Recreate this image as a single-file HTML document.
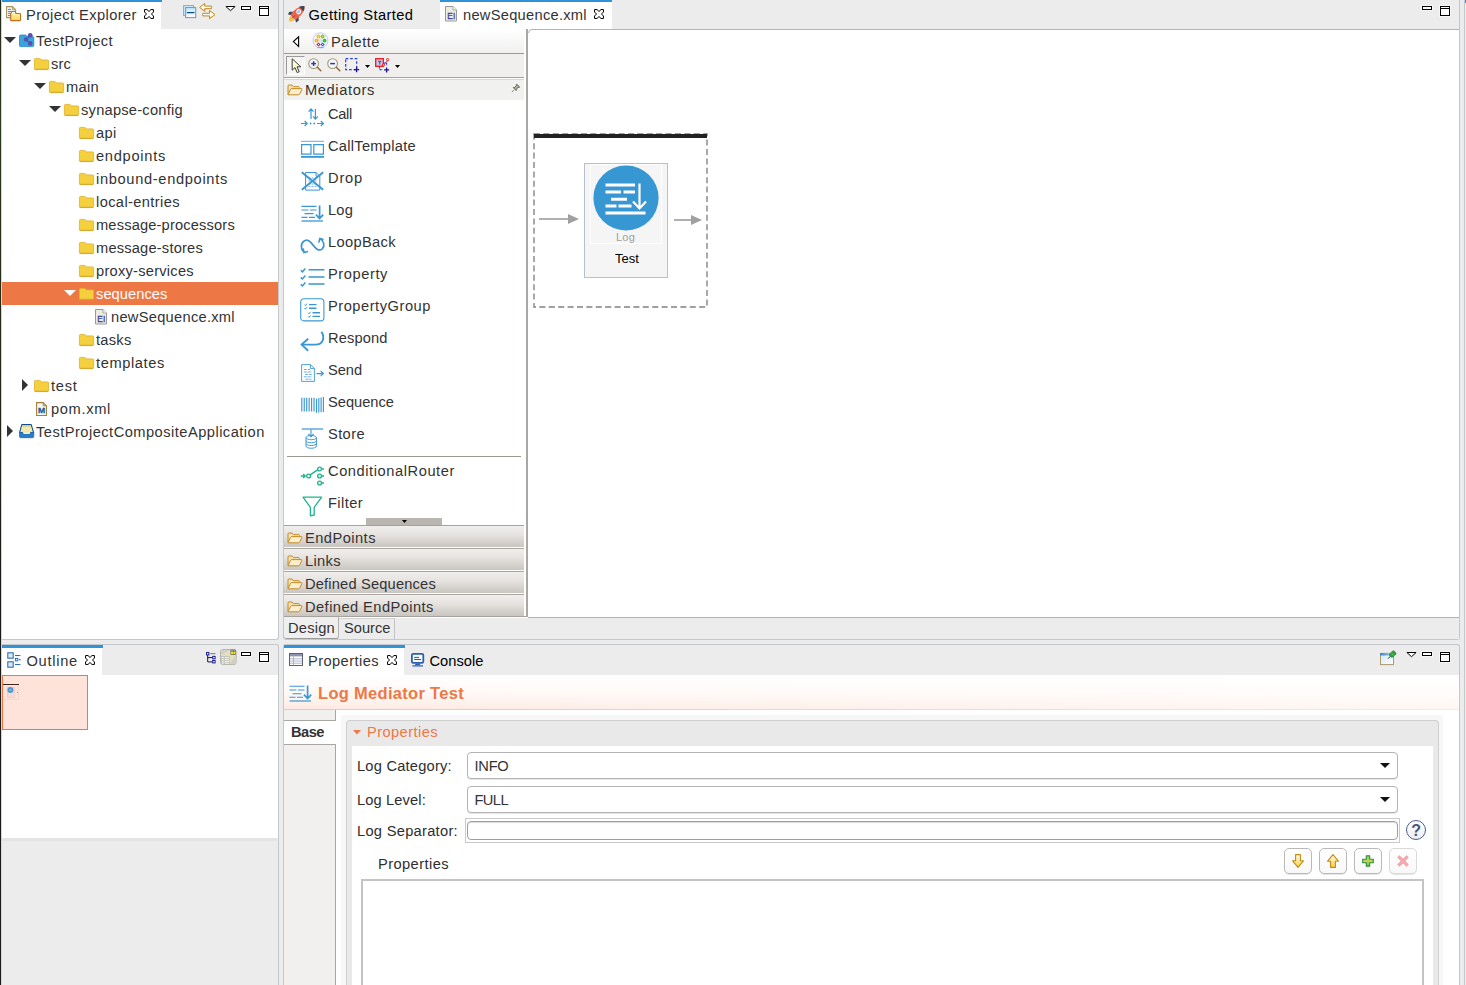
<!DOCTYPE html>
<html><head><meta charset="utf-8"><title>IDE</title>
<style>
html,body{margin:0;padding:0;}
body{width:1466px;height:985px;overflow:hidden;background:#ececec;position:relative;font-family:"Liberation Sans",sans-serif;}
div,span.t,svg{position:absolute;box-sizing:border-box;}
span.t{white-space:nowrap;}
svg{overflow:visible;}
</style></head><body>
<div style="left:0px;top:0px;width:1px;height:985px;background:linear-gradient(#232a18 0%,#2c3a1c 12%,#1f2416 45%,#1a1a1a 60%,#1c1c1c 100%);"></div>
<div style="left:1px;top:0px;width:1px;height:985px;background:#d2d6da;"></div>
<div style="left:2px;top:0px;width:277px;height:640px;background:#fff;border-right:1px solid #c3c8cd;border-bottom:1px solid #c3c8cd;border-radius:0 0 3px 0;"></div>
<div style="left:161px;top:0px;width:117px;height:29px;background:#ececec;"></div>
<div style="left:2px;top:0px;width:160px;height:2px;background:#3093d9;"></div>
<div style="left:2px;top:644px;width:277px;height:341px;background:#ececec;border-right:1px solid #c3c8cd;border-top:1px solid #c3c8cd;border-radius:0 3px 0 0;"></div>
<div style="left:2px;top:675px;width:276px;height:163px;background:#fff;"></div>
<div style="left:2px;top:648px;width:100px;height:27px;background:#fff;"></div>
<div style="left:2px;top:645px;width:101px;height:3px;background:#3093d9;"></div>
<div style="left:283px;top:0px;width:1177px;height:640px;background:#fff;border:1px solid #c3c8cd;border-top:0;border-radius:0 0 3px 3px;"></div>
<div style="left:284px;top:0px;width:1175px;height:29px;background:#ececec;"></div>
<div style="left:440px;top:0px;width:172px;height:29px;background:#fff;"></div>
<div style="left:440px;top:0px;width:172px;height:2px;background:#3093d9;"></div>
<div style="left:283px;top:644px;width:1177px;height:341px;background:#ececec;border:1px solid #c3c8cd;border-bottom:0;border-radius:3px 3px 0 0;"></div>
<div style="left:284px;top:675px;width:1175px;height:310px;background:#fff;"></div>
<div style="left:284px;top:648px;width:120px;height:27px;background:#fff;"></div>
<div style="left:284px;top:645px;width:121px;height:3px;background:#3093d9;"></div>
<div style="left:1464px;top:0px;width:1px;height:985px;background:#c3c8cd;"></div>
<div style="left:1465px;top:0px;width:1px;height:3px;background:#3093d9;"></div>
<svg width="0" height="0" style="left:0;top:0"><defs><linearGradient id="gf" x1="0" y1="0" x2="0" y2="1"><stop offset="0" stop-color="#fff8b8"/><stop offset="1" stop-color="#ffd45c"/></linearGradient></defs></svg>
<svg style="left:6px;top:6px;" width="16" height="16" viewBox="0 0 16 16"><path d="M0.6,0.6 L6.4,0.6 L9.6,3.8 L9.6,11.6 L0.6,11.6 Z" fill="#f4f6fc" stroke="#a8945c" stroke-width="1.1"/>
<path d="M6.4,0.6 L6.4,3.8 L9.6,3.8 Z" fill="#d8c078" stroke="#a8945c" stroke-width="0.7"/>
<path d="M2,3.4 h3 M2,5.5 h4.6 M2,7.4 h3 M2,9.5 h3" stroke="#5f86d0" stroke-width="1"/>
<path d="M4.7,14.4 L4.7,8 Q4.7,7.6 5.1,7 L5.6,5.9 Q5.8,5.5 6.3,5.5 L8.6,5.5 Q9.1,5.5 9.3,5.9 L10,7.5 L13.7,7.5 Q14.6,7.5 14.6,8.4 L14.6,13.7 Q14.6,14.6 13.7,14.6 L5.6,14.6 Q4.7,14.6 4.7,13.7 Z" fill="url(#gf)" stroke="#b8701e" stroke-width="1.1" stroke-linejoin="round"/>
<path d="M6.2,6.6 h2.6" stroke="#fff" stroke-width="1"/></svg>
<span class="t" style="left:26px;top:6px;font-size:14.67px;line-height:19px;letter-spacing:0.415px;color:#333;">Project Explorer</span>
<svg style="left:144px;top:9px;" width="10" height="10" viewBox="0 0 10 10"><path d="M0.55,0.55 L3,0.55 L5,2.5 L7,0.55 L9.45,0.55 L9.45,3 L7.5,5 L9.45,7 L9.45,9.45 L7,9.45 L5,7.5 L3,9.45 L0.55,9.45 L0.55,7 L2.5,5 L0.55,3 Z" fill="#fff" stroke="#000" stroke-width="1.0" stroke-linejoin="round"/></svg>
<svg width="0" height="0" style="left:0;top:0"><defs><linearGradient id="gc" x1="0" y1="0" x2="0" y2="1"><stop offset="0" stop-color="#c4eafc"/><stop offset="1" stop-color="#ffffff"/></linearGradient><linearGradient id="ga" x1="0" y1="0" x2="0" y2="1"><stop offset="0" stop-color="#fff6cc"/><stop offset="0.5" stop-color="#fffdf4"/><stop offset="1" stop-color="#ffe89c"/></linearGradient></defs></svg>
<svg style="left:183px;top:5px;" width="14" height="14" viewBox="0 0 14 14"><rect x="0.6" y="0.6" width="10" height="10" fill="#c8ecfc" stroke="#9aa2c0" stroke-width="1"/>
<rect x="2.7" y="2.6" width="10" height="10" fill="url(#gc)" stroke="#8a93b2" stroke-width="1.1"/>
<path d="M4.4,7.6 h6.6" stroke="#0a4884" stroke-width="1.3" stroke-linecap="round"/></svg>
<svg style="left:199px;top:3px;" width="17" height="16" viewBox="0 0 17 16"><path d="M0.7,4.4 L5.7,0.5 L5.7,3.1 L12.3,3.1 Q13,4.4 12.3,5.7 L5.7,5.7 L5.7,8.3 Z" fill="url(#ga)" stroke="#c0881a" stroke-width="1" stroke-linejoin="round"/>
<path d="M16,11.6 L10.5,7.5 L10.5,10.3 L3.9,10.3 Q3.2,11.6 3.9,12.9 L10.5,12.9 L10.5,15.7 Z" fill="url(#ga)" stroke="#c0881a" stroke-width="1" stroke-linejoin="round"/></svg>
<svg style="left:225px;top:6px;" width="11" height="6" viewBox="0 0 11 6"><path d="M0.9,0.5 L10.1,0.5 L5.5,4.7 Z" fill="#fff" stroke="#000" stroke-width="1"/></svg>
<div style="left:240px;top:5px;width:12px;height:6px;background:#fff;opacity:.55;"></div>
<div style="left:241px;top:6px;width:10px;height:4px;border:1px solid #000;background:#fff;"></div>
<div style="left:258px;top:5px;width:12px;height:12px;background:#fff;opacity:.55;"></div>
<div style="left:259px;top:6px;width:10px;height:10px;border:1px solid #000;background:#fff;"></div>
<div style="left:259px;top:8px;width:10px;height:1px;background:#000;"></div>
<svg style="left:4px;top:37px;" width="12" height="6" viewBox="0 0 12 6"><path d="M0,0 L12,0 L6,6 Z" fill="#333"/></svg>
<svg style="left:19px;top:32px;" width="16" height="16" viewBox="0 0 16 16"><path d="M0.5,4.2 Q0.5,3 1.7,3 L6.4,3 Q7,3 7.4,3.6 L8,4.6 L13.6,4.6 Q14.8,4.6 14.8,5.8 L14.8,13.4 Q14.8,14.6 13.6,14.6 L1.7,14.6 Q0.5,14.6 0.5,13.4 Z" fill="#38a4dc" stroke="#1f86c8" stroke-width="0.8"/>
<path d="M11.2,3.3 L7.1,7.5 L11.2,11.4" stroke="#5b50b0" stroke-width="1.2" fill="none"/>
<circle cx="11.2" cy="3.3" r="2.4" fill="#5b50b0"/><circle cx="7.1" cy="7.5" r="2.3" fill="#5b50b0"/><circle cx="11.2" cy="11.4" r="2.3" fill="#5b50b0"/></svg>
<span class="t" style="left:36px;top:32px;font-size:14.67px;line-height:19px;letter-spacing:0.403px;color:#333333;">TestProject</span>
<svg style="left:19px;top:60px;" width="12" height="6" viewBox="0 0 12 6"><path d="M0,0 L12,0 L6,6 Z" fill="#333"/></svg>
<svg style="left:34px;top:58px;" width="15" height="12" viewBox="0 0 15 12"><path d="M0.4,1.5 Q0.4,0.4 1.5,0.4 L5.4,0.4 Q6.3,0.4 6.8,1.2 L7.2,1.9 L13.5,1.9 Q14.6,1.9 14.6,3 L14.6,10.5 Q14.6,11.6 13.5,11.6 L1.5,11.6 Q0.4,11.6 0.4,10.5 Z" fill="#f4d03f" stroke="#e0b02a" stroke-width="0.8"/><path d="M0.8,11.3 L14.2,11.3" stroke="#d09c22" stroke-width="0.8"/></svg>
<span class="t" style="left:51px;top:55px;font-size:14.67px;line-height:19px;letter-spacing:0.148px;color:#333333;">src</span>
<svg style="left:34px;top:83px;" width="12" height="6" viewBox="0 0 12 6"><path d="M0,0 L12,0 L6,6 Z" fill="#333"/></svg>
<svg style="left:49px;top:81px;" width="15" height="12" viewBox="0 0 15 12"><path d="M0.4,1.5 Q0.4,0.4 1.5,0.4 L5.4,0.4 Q6.3,0.4 6.8,1.2 L7.2,1.9 L13.5,1.9 Q14.6,1.9 14.6,3 L14.6,10.5 Q14.6,11.6 13.5,11.6 L1.5,11.6 Q0.4,11.6 0.4,10.5 Z" fill="#f4d03f" stroke="#e0b02a" stroke-width="0.8"/><path d="M0.8,11.3 L14.2,11.3" stroke="#d09c22" stroke-width="0.8"/></svg>
<span class="t" style="left:66px;top:78px;font-size:14.67px;line-height:19px;letter-spacing:0.301px;color:#333333;">main</span>
<svg style="left:49px;top:106px;" width="12" height="6" viewBox="0 0 12 6"><path d="M0,0 L12,0 L6,6 Z" fill="#333"/></svg>
<svg style="left:64px;top:104px;" width="15" height="12" viewBox="0 0 15 12"><path d="M0.4,1.5 Q0.4,0.4 1.5,0.4 L5.4,0.4 Q6.3,0.4 6.8,1.2 L7.2,1.9 L13.5,1.9 Q14.6,1.9 14.6,3 L14.6,10.5 Q14.6,11.6 13.5,11.6 L1.5,11.6 Q0.4,11.6 0.4,10.5 Z" fill="#f4d03f" stroke="#e0b02a" stroke-width="0.8"/><path d="M0.8,11.3 L14.2,11.3" stroke="#d09c22" stroke-width="0.8"/></svg>
<span class="t" style="left:81px;top:101px;font-size:14.67px;line-height:19px;letter-spacing:0.238px;color:#333333;">synapse-config</span>
<svg style="left:79px;top:127px;" width="15" height="12" viewBox="0 0 15 12"><path d="M0.4,1.5 Q0.4,0.4 1.5,0.4 L5.4,0.4 Q6.3,0.4 6.8,1.2 L7.2,1.9 L13.5,1.9 Q14.6,1.9 14.6,3 L14.6,10.5 Q14.6,11.6 13.5,11.6 L1.5,11.6 Q0.4,11.6 0.4,10.5 Z" fill="#f4d03f" stroke="#e0b02a" stroke-width="0.8"/><path d="M0.8,11.3 L14.2,11.3" stroke="#d09c22" stroke-width="0.8"/></svg>
<span class="t" style="left:96px;top:124px;font-size:14.67px;line-height:19px;letter-spacing:0.308px;color:#333333;">api</span>
<svg style="left:79px;top:150px;" width="15" height="12" viewBox="0 0 15 12"><path d="M0.4,1.5 Q0.4,0.4 1.5,0.4 L5.4,0.4 Q6.3,0.4 6.8,1.2 L7.2,1.9 L13.5,1.9 Q14.6,1.9 14.6,3 L14.6,10.5 Q14.6,11.6 13.5,11.6 L1.5,11.6 Q0.4,11.6 0.4,10.5 Z" fill="#f4d03f" stroke="#e0b02a" stroke-width="0.8"/><path d="M0.8,11.3 L14.2,11.3" stroke="#d09c22" stroke-width="0.8"/></svg>
<span class="t" style="left:96px;top:147px;font-size:14.67px;line-height:19px;letter-spacing:0.709px;color:#333333;">endpoints</span>
<svg style="left:79px;top:173px;" width="15" height="12" viewBox="0 0 15 12"><path d="M0.4,1.5 Q0.4,0.4 1.5,0.4 L5.4,0.4 Q6.3,0.4 6.8,1.2 L7.2,1.9 L13.5,1.9 Q14.6,1.9 14.6,3 L14.6,10.5 Q14.6,11.6 13.5,11.6 L1.5,11.6 Q0.4,11.6 0.4,10.5 Z" fill="#f4d03f" stroke="#e0b02a" stroke-width="0.8"/><path d="M0.8,11.3 L14.2,11.3" stroke="#d09c22" stroke-width="0.8"/></svg>
<span class="t" style="left:96px;top:170px;font-size:14.67px;line-height:19px;letter-spacing:0.664px;color:#333333;">inbound-endpoints</span>
<svg style="left:79px;top:196px;" width="15" height="12" viewBox="0 0 15 12"><path d="M0.4,1.5 Q0.4,0.4 1.5,0.4 L5.4,0.4 Q6.3,0.4 6.8,1.2 L7.2,1.9 L13.5,1.9 Q14.6,1.9 14.6,3 L14.6,10.5 Q14.6,11.6 13.5,11.6 L1.5,11.6 Q0.4,11.6 0.4,10.5 Z" fill="#f4d03f" stroke="#e0b02a" stroke-width="0.8"/><path d="M0.8,11.3 L14.2,11.3" stroke="#d09c22" stroke-width="0.8"/></svg>
<span class="t" style="left:96px;top:193px;font-size:14.67px;line-height:19px;letter-spacing:0.378px;color:#333333;">local-entries</span>
<svg style="left:79px;top:219px;" width="15" height="12" viewBox="0 0 15 12"><path d="M0.4,1.5 Q0.4,0.4 1.5,0.4 L5.4,0.4 Q6.3,0.4 6.8,1.2 L7.2,1.9 L13.5,1.9 Q14.6,1.9 14.6,3 L14.6,10.5 Q14.6,11.6 13.5,11.6 L1.5,11.6 Q0.4,11.6 0.4,10.5 Z" fill="#f4d03f" stroke="#e0b02a" stroke-width="0.8"/><path d="M0.8,11.3 L14.2,11.3" stroke="#d09c22" stroke-width="0.8"/></svg>
<span class="t" style="left:96px;top:216px;font-size:14.67px;line-height:19px;letter-spacing:0.158px;color:#333333;">message-processors</span>
<svg style="left:79px;top:242px;" width="15" height="12" viewBox="0 0 15 12"><path d="M0.4,1.5 Q0.4,0.4 1.5,0.4 L5.4,0.4 Q6.3,0.4 6.8,1.2 L7.2,1.9 L13.5,1.9 Q14.6,1.9 14.6,3 L14.6,10.5 Q14.6,11.6 13.5,11.6 L1.5,11.6 Q0.4,11.6 0.4,10.5 Z" fill="#f4d03f" stroke="#e0b02a" stroke-width="0.8"/><path d="M0.8,11.3 L14.2,11.3" stroke="#d09c22" stroke-width="0.8"/></svg>
<span class="t" style="left:96px;top:239px;font-size:14.67px;line-height:19px;letter-spacing:0.189px;color:#333333;">message-stores</span>
<svg style="left:79px;top:265px;" width="15" height="12" viewBox="0 0 15 12"><path d="M0.4,1.5 Q0.4,0.4 1.5,0.4 L5.4,0.4 Q6.3,0.4 6.8,1.2 L7.2,1.9 L13.5,1.9 Q14.6,1.9 14.6,3 L14.6,10.5 Q14.6,11.6 13.5,11.6 L1.5,11.6 Q0.4,11.6 0.4,10.5 Z" fill="#f4d03f" stroke="#e0b02a" stroke-width="0.8"/><path d="M0.8,11.3 L14.2,11.3" stroke="#d09c22" stroke-width="0.8"/></svg>
<span class="t" style="left:96px;top:262px;font-size:14.67px;line-height:19px;letter-spacing:0.246px;color:#333333;">proxy-services</span>
<div style="left:2px;top:282px;width:276px;height:23px;background:#ee7746;"></div>
<svg style="left:64px;top:290px;" width="12" height="6" viewBox="0 0 12 6"><path d="M0,0 L12,0 L6,6 Z" fill="#fff"/></svg>
<svg style="left:79px;top:288px;" width="15" height="12" viewBox="0 0 15 12"><path d="M0.4,1.5 Q0.4,0.4 1.5,0.4 L5.4,0.4 Q6.3,0.4 6.8,1.2 L7.2,1.9 L13.5,1.9 Q14.6,1.9 14.6,3 L14.6,10.5 Q14.6,11.6 13.5,11.6 L1.5,11.6 Q0.4,11.6 0.4,10.5 Z" fill="#f4d03f" stroke="#e0b02a" stroke-width="0.8"/><path d="M0.8,11.3 L14.2,11.3" stroke="#d09c22" stroke-width="0.8"/></svg>
<span class="t" style="left:96px;top:285px;font-size:14.67px;line-height:19px;letter-spacing:0.060px;color:#fff;">sequences</span>
<svg style="left:95px;top:309px;" width="13" height="16" viewBox="0 0 13 16"><path d="M0.5,0.5 L8,0.5 L11.5,4 L11.5,15 L0.5,15 Z" fill="#ecece0" stroke="#9a9a94" stroke-width="1"/><path d="M8,0.5 L8,4 L11.5,4" fill="#fafaf4" stroke="#9a9a94" stroke-width="0.8"/>
<text x="2.3" y="12.9" font-family="Liberation Sans" font-size="9.8" fill="#3a3f9c" stroke="#3a3f9c" stroke-width="0.3" textLength="8" lengthAdjust="spacingAndGlyphs">EI</text></svg>
<span class="t" style="left:111px;top:308px;font-size:14.67px;line-height:19px;letter-spacing:0.275px;color:#333333;">newSequence.xml</span>
<svg style="left:79px;top:334px;" width="15" height="12" viewBox="0 0 15 12"><path d="M0.4,1.5 Q0.4,0.4 1.5,0.4 L5.4,0.4 Q6.3,0.4 6.8,1.2 L7.2,1.9 L13.5,1.9 Q14.6,1.9 14.6,3 L14.6,10.5 Q14.6,11.6 13.5,11.6 L1.5,11.6 Q0.4,11.6 0.4,10.5 Z" fill="#f4d03f" stroke="#e0b02a" stroke-width="0.8"/><path d="M0.8,11.3 L14.2,11.3" stroke="#d09c22" stroke-width="0.8"/></svg>
<span class="t" style="left:96px;top:331px;font-size:14.67px;line-height:19px;letter-spacing:0.252px;color:#333333;">tasks</span>
<svg style="left:79px;top:357px;" width="15" height="12" viewBox="0 0 15 12"><path d="M0.4,1.5 Q0.4,0.4 1.5,0.4 L5.4,0.4 Q6.3,0.4 6.8,1.2 L7.2,1.9 L13.5,1.9 Q14.6,1.9 14.6,3 L14.6,10.5 Q14.6,11.6 13.5,11.6 L1.5,11.6 Q0.4,11.6 0.4,10.5 Z" fill="#f4d03f" stroke="#e0b02a" stroke-width="0.8"/><path d="M0.8,11.3 L14.2,11.3" stroke="#d09c22" stroke-width="0.8"/></svg>
<span class="t" style="left:96px;top:354px;font-size:14.67px;line-height:19px;letter-spacing:0.600px;color:#333333;">templates</span>
<svg style="left:22px;top:379px;" width="6" height="12" viewBox="0 0 6 12"><path d="M0,0 L6,6 L0,12 Z" fill="#333"/></svg>
<svg style="left:34px;top:380px;" width="15" height="12" viewBox="0 0 15 12"><path d="M0.4,1.5 Q0.4,0.4 1.5,0.4 L5.4,0.4 Q6.3,0.4 6.8,1.2 L7.2,1.9 L13.5,1.9 Q14.6,1.9 14.6,3 L14.6,10.5 Q14.6,11.6 13.5,11.6 L1.5,11.6 Q0.4,11.6 0.4,10.5 Z" fill="#f4d03f" stroke="#e0b02a" stroke-width="0.8"/><path d="M0.8,11.3 L14.2,11.3" stroke="#d09c22" stroke-width="0.8"/></svg>
<span class="t" style="left:51px;top:377px;font-size:14.67px;line-height:19px;letter-spacing:0.714px;color:#333333;">test</span>
<svg style="left:36px;top:402px;" width="12" height="15" viewBox="0 0 12 15"><path d="M0.6,0.6 L7.2,0.6 L10.5,3.9 L10.5,13.5 L0.6,13.5 Z" fill="#f4f6fc" stroke="#a08234" stroke-width="1.1"/><path d="M7.2,0.6 L7.2,3.9 L10.5,3.9 Z" fill="#dcb45c" stroke="#a08234" stroke-width="0.7"/>
<text x="1.9" y="11" font-family="Liberation Sans" font-size="7.6" font-weight="bold" fill="#1f5a98" stroke="#1f5a98" stroke-width="0.3" textLength="7.2" lengthAdjust="spacingAndGlyphs">M</text></svg>
<span class="t" style="left:51px;top:400px;font-size:14.67px;line-height:19px;letter-spacing:0.653px;color:#333333;">pom.xml</span>
<svg style="left:7px;top:425px;" width="6" height="12" viewBox="0 0 6 12"><path d="M0,0 L6,6 L0,12 Z" fill="#333"/></svg>
<svg style="left:19px;top:424px;" width="16" height="15" viewBox="0 0 16 15"><path d="M2.8,0.6 L12.2,0.6 L14.6,8.6 L0.6,8.6 Z" fill="#f6eeb4" stroke="#0f4f88" stroke-width="1.1" stroke-linejoin="round"/>
<path d="M3.2,1.8 h8.6" stroke="#d6c690" stroke-width="1.6"/><path d="M2.6,4 h9.8 M2,6 h11" stroke="#ece0a0" stroke-width="0.8"/>
<path d="M0.5,8.4 L14.8,8.4 L14.8,12.6 Q14.8,13.7 13.7,13.7 L1.6,13.7 Q0.5,13.7 0.5,12.6 Z" fill="#2b7cc6" stroke="#1c66b0" stroke-width="0.7"/>
<path d="M3.6,7.6 L11.6,7.6 L10.6,9.9 L4.6,9.9 Z" fill="#f6eeb4"/></svg>
<span class="t" style="left:36px;top:423px;font-size:14.67px;line-height:19px;letter-spacing:0.469px;color:#333333;">TestProjectCompositeApplication</span>
<svg style="left:7px;top:652px;" width="14" height="16" viewBox="0 0 14 16"><rect x="0.8" y="0.8" width="5.4" height="5.4" fill="#dcebfb" stroke="#2c6fb4" stroke-width="1.1"/>
<rect x="0.8" y="9.8" width="5.4" height="5.4" fill="#dcebfb" stroke="#2c6fb4" stroke-width="1.1"/>
<rect x="8.4" y="6.4" width="2.4" height="2.4" fill="#fff" stroke="#2c6fb4" stroke-width="1"/>
<path d="M8,3.5 h5.4 M12,7.6 h1.6 M8,12.5 h5.4" stroke="#2c6fb4" stroke-width="1.1"/></svg>
<span class="t" style="left:26.5px;top:652px;font-size:14.67px;line-height:19px;letter-spacing:0.717px;color:#333;">Outline</span>
<svg style="left:85px;top:655px;" width="10" height="10" viewBox="0 0 10 10"><path d="M0.55,0.55 L3,0.55 L5,2.5 L7,0.55 L9.45,0.55 L9.45,3 L7.5,5 L9.45,7 L9.45,9.45 L7,9.45 L5,7.5 L3,9.45 L0.55,9.45 L0.55,7 L2.5,5 L0.55,3 Z" fill="#fff" stroke="#000" stroke-width="1.0" stroke-linejoin="round"/></svg>
<svg style="left:206px;top:652px;" width="10" height="11" viewBox="0 0 10 11"><path d="M1.7,3 v6.9 h5 M1.7,5.6 h5" stroke="#15154a" stroke-width="1" fill="none"/>
<path d="M4.4,1.7 h5" stroke="#6e6e78" stroke-width="1"/>
<rect x="0.5" y="0.5" width="2.4" height="2.4" fill="#fff" stroke="#1c1c8c" stroke-width="1"/>
<rect x="6.7" y="4.4" width="2.4" height="2.4" fill="#fff" stroke="#1c1c8c" stroke-width="1"/>
<rect x="6.7" y="8.5" width="2.4" height="2.4" fill="#fff" stroke="#1c1c8c" stroke-width="1"/></svg>
<svg style="left:220px;top:649px;" width="17" height="16" viewBox="0 0 17 16"><rect x="0.5" y="0.5" width="15.6" height="15" rx="2.2" fill="#e4e0bc" stroke="#b6b6ae" stroke-width="1"/>
<path d="M1,6.4 L9.8,1 L1.6,1 Q1,1 1,1.8 Z" fill="#d2d2cc"/>
<path d="M15.6,6 L15.6,14 Q15.6,15 14.6,15 L10,15 Z" fill="#cfcfc8"/>
<rect x="1.2" y="7" width="8.6" height="8" fill="#c2c2be"/>
<path d="M2,8.6 h1.8 M4.8,8.6 h4.2 M2,10.6 h1.8 M4.8,10.6 h4.2 M2,12.6 h1.8 M4.8,12.6 h4.2 M2,14.3 h1.8 M4.8,14.3 h4.2" stroke="#ecece8" stroke-width="1.1"/>
<rect x="10.4" y="0.6" width="5.6" height="5.4" rx="0.8" fill="#74746e"/>
<path d="M11.2,1.8 h1.6 M13.6,1.8 h1.6" stroke="#c8c8c0" stroke-width="0.8"/>
<rect x="11.1" y="2.9" width="1.9" height="2.2" fill="#f6ea1c"/><rect x="13.5" y="2.9" width="1.9" height="2.2" fill="#f6ea1c"/></svg>
<div style="left:240px;top:651px;width:12px;height:6px;background:#fff;opacity:.55;"></div>
<div style="left:241px;top:652px;width:10px;height:4px;border:1px solid #000;background:#fff;"></div>
<div style="left:258px;top:651px;width:12px;height:12px;background:#fff;opacity:.55;"></div>
<div style="left:259px;top:652px;width:10px;height:10px;border:1px solid #000;background:#fff;"></div>
<div style="left:259px;top:654px;width:10px;height:1px;background:#000;"></div>
<div style="left:2px;top:675px;width:86px;height:55px;background:#fde3d9;border:1px solid #ee7746;"></div>
<div style="left:3px;top:684px;width:16px;height:1px;background:#3a2624;"></div>
<div style="left:7px;top:687px;width:8px;height:11px;background:#f4dcd4;border:1px solid #ecd0c8;"></div>
<div style="left:3px;top:699px;width:15px;height:1px;background:#f3d6cc;"></div>
<div style="left:18px;top:686px;width:1px;height:14px;background:#f3d6cc;"></div>
<div style="left:17px;top:692px;width:1px;height:1px;background:#b09890;"></div>
<svg style="left:7px;top:687px;" width="7" height="7" viewBox="0 0 7 7"><circle cx="3.4" cy="3" r="3" fill="#4f97cf"/><path d="M2,2.4 h2.6 M2,3.6 h2.6" stroke="#9cc4e4" stroke-width="0.6"/></svg>
<div style="left:2px;top:838px;width:275px;height:3px;background:#e4e4e4;"></div>
<div style="left:2px;top:841px;width:276px;height:144px;background:#ececec;"></div>
<svg style="left:288px;top:6px;" width="17" height="17" viewBox="0 0 17 17"><g transform="translate(8.6,7.8) rotate(45)">
<path d="M-3.4,0.4 L-6.4,3.6 L-5.8,6.6 L-2.8,4.8 Z M3.4,0.4 L6.4,3.6 L5.8,6.6 L2.8,4.8 Z" fill="#2f4a60"/>
<path d="M-2.8,4.6 L2.8,4.6 L2.2,8 L0,10.8 L-2.2,8 Z" fill="#f8b83c"/>
<path d="M-1,4.6 L1,4.6 L0,8 Z" fill="#fde28a"/>
<path d="M0,-11 C3.8,-8 4.7,-2 3.5,5.2 L-3.5,5.2 C-4.7,-2 -3.8,-8 0,-11 Z" fill="#f0624e"/>
<path d="M0,-11 C1.6,-9.8 2.6,-8.4 3.2,-6.8 L-3.2,-6.8 C-2.6,-8.4 -1.6,-9.8 0,-11 Z" fill="#2f4a60"/>
<circle cx="0" cy="-2.9" r="2.5" fill="#fff"/><circle cx="0" cy="-2.9" r="1.6" fill="#86d4f4"/>
<path d="M0,2.4 v4" stroke="#2f4a60" stroke-width="0.9"/>
</g></svg>
<span class="t" style="left:308.5px;top:6px;font-size:14.67px;line-height:19px;letter-spacing:0.422px;color:#000;">Getting Started</span>
<svg style="left:445px;top:6px;" width="13" height="16" viewBox="0 0 13 16"><path d="M0.5,0.5 L8,0.5 L11.5,4 L11.5,15 L0.5,15 Z" fill="#ecece0" stroke="#9a9a94" stroke-width="1"/><path d="M8,0.5 L8,4 L11.5,4" fill="#fafaf4" stroke="#9a9a94" stroke-width="0.8"/>
<text x="2.3" y="12.9" font-family="Liberation Sans" font-size="9.8" fill="#3a3f9c" stroke="#3a3f9c" stroke-width="0.3" textLength="8" lengthAdjust="spacingAndGlyphs">EI</text></svg>
<span class="t" style="left:463px;top:6px;font-size:14.67px;line-height:19px;letter-spacing:0.275px;color:#333;">newSequence.xml</span>
<svg style="left:594px;top:9px;" width="10" height="10" viewBox="0 0 10 10"><path d="M0.55,0.55 L3,0.55 L5,2.5 L7,0.55 L9.45,0.55 L9.45,3 L7.5,5 L9.45,7 L9.45,9.45 L7,9.45 L5,7.5 L3,9.45 L0.55,9.45 L0.55,7 L2.5,5 L0.55,3 Z" fill="#fff" stroke="#000" stroke-width="1.0" stroke-linejoin="round"/></svg>
<div style="left:1421px;top:5px;width:12px;height:6px;background:#fff;opacity:.55;"></div>
<div style="left:1422px;top:6px;width:10px;height:4px;border:1px solid #000;background:#fff;"></div>
<div style="left:1439px;top:5px;width:12px;height:12px;background:#fff;opacity:.55;"></div>
<div style="left:1440px;top:6px;width:10px;height:10px;border:1px solid #000;background:#fff;"></div>
<div style="left:1440px;top:8px;width:10px;height:1px;background:#000;"></div>
<div style="left:284px;top:29px;width:242px;height:588px;background:#fff;"></div>
<div style="left:526px;top:29px;width:2px;height:588px;background:#aaa7a2;"></div>
<div style="left:284px;top:29px;width:240px;height:24px;background:linear-gradient(#ffffff,#f1f0ef);"></div>
<div style="left:284px;top:53px;width:240px;height:1px;background:#9b9893;"></div>
<div style="left:284px;top:54px;width:240px;height:23px;background:#f0efee;"></div>
<div style="left:284px;top:77px;width:240px;height:1px;background:#a5a29d;"></div>
<div style="left:284px;top:78px;width:240px;height:1px;background:#fdfdfc;"></div>
<div style="left:284px;top:79px;width:240px;height:1px;background:#dad8d4;"></div>
<div style="left:284px;top:80px;width:240px;height:20px;background:#f1f1ef;"></div>
<svg style="left:292px;top:36px;" width="8" height="11" viewBox="0 0 8 11"><path d="M6.6,0.8 L6.6,10.4 L1.4,5.6 Z" fill="#fff" stroke="#000" stroke-width="1.1" stroke-linejoin="miter"/></svg>
<svg style="left:312px;top:32px;" width="17" height="17" viewBox="0 0 17 17"><circle cx="8.5" cy="8.3" r="7.5" fill="#eef3fc" stroke="#bccbe8" stroke-width="0.9"/>
<ellipse cx="8.5" cy="8.6" rx="2.2" ry="2.2" fill="#d8e2f4"/>
<path d="M5.4,15.6 h6.2" stroke="#7a96dc" stroke-width="0.9"/>
<circle cx="6.5" cy="4.5" r="1.35" fill="#ffe838" stroke="#f6a010" stroke-width="1"/>
<circle cx="10.6" cy="4.5" r="1.35" fill="#d8e838" stroke="#62aa10" stroke-width="1"/>
<circle cx="4.5" cy="8.6" r="1.35" fill="#ffd838" stroke="#f89010" stroke-width="1"/>
<circle cx="12.6" cy="8.6" r="1.35" fill="#58d838" stroke="#10a018" stroke-width="1"/>
<rect x="5.5" y="11.5" width="2" height="2" transform="rotate(45 6.5 12.5)" fill="#fff" stroke="#d81828" stroke-width="1"/>
<rect x="9.6" y="11.5" width="2" height="2" transform="rotate(45 10.6 12.5)" fill="#fff" stroke="#1058e8" stroke-width="1"/></svg>
<span class="t" style="left:331px;top:33px;font-size:14.67px;line-height:19px;letter-spacing:0.475px;color:#333;">Palette</span>
<div style="left:286px;top:56px;width:19px;height:19px;border-top:1px solid #9a9a9a;border-left:1px solid #9a9a9a;border-right:1px solid #fff;border-bottom:1px solid #fff;background:#f6f5f4;"></div>
<svg style="left:291px;top:58px;" width="12" height="16" viewBox="0 0 12 16"><path d="M1.2,0.8 L1.2,12.2 L4,9.6 L6.2,14.6 L8.2,13.7 L6,8.8 L9.8,8.8 Z" fill="#ffffd4" stroke="#3a3a3a" stroke-width="1" stroke-linejoin="round"/></svg>
<svg style="left:308px;top:58px;" width="14" height="14" viewBox="0 0 14 14"><circle cx="5.6" cy="5.6" r="4.9" fill="#f4f6fb" stroke="#a89c72" stroke-width="1.1"/>
<path d="M9.3,9.3 L12.8,12.8" stroke="#8c6a3c" stroke-width="1.5" stroke-linecap="round"/>
<path d="M3.2,5.6 h4.8" stroke="#2a3ea8" stroke-width="1.5"/><path d="M5.6,3.2 v4.8" stroke="#2a3ea8" stroke-width="1.5"/></svg>
<svg style="left:327px;top:58px;" width="14" height="14" viewBox="0 0 14 14"><circle cx="5.6" cy="5.6" r="4.9" fill="#f4f6fb" stroke="#a89c72" stroke-width="1.1"/>
<path d="M9.3,9.3 L12.8,12.8" stroke="#8c6a3c" stroke-width="1.5" stroke-linecap="round"/>
<path d="M3.2,5.6 h4.8" stroke="#2a3ea8" stroke-width="1.5"/></svg>
<svg style="left:345px;top:58px;" width="15" height="15" viewBox="0 0 15 15"><rect x="0.7" y="0.7" width="11" height="11" fill="none" stroke="#1f3fd8" stroke-width="1.2" stroke-dasharray="2.6 1.9"/>
<path d="M11.6,9 v5.2 M9,11.6 h5.2" stroke="#20108a" stroke-width="1.3"/></svg>
<svg style="left:365px;top:64.5px;" width="5" height="3" viewBox="0 0 5 3"><path d="M0,0 L5,0 L2.5,3 Z" fill="#000"/></svg>
<svg style="left:375px;top:58px;" width="15" height="15" viewBox="0 0 15 15"><rect x="0.7" y="0.7" width="7.6" height="7.6" fill="#b9cdf6" stroke="#f01818" stroke-width="1.3"/>
<path d="M3.2,3.4 h3 M4.7,3.4 v3" stroke="#f01818" stroke-width="1.1"/>
<path d="M4.6,8.6 v3 h3.2 M8.4,5 h3.2 v3" stroke="#1f3fd8" stroke-width="1.1" fill="none" stroke-dasharray="2 1"/>
<circle cx="12.6" cy="1.6" r="1.1" fill="#fff" stroke="#f01818" stroke-width="1"/><path d="M12.6,2.6 L9,6.6" stroke="#f01818" stroke-width="1"/>
<circle cx="8.4" cy="7" r="1.1" fill="#fff" stroke="#f01818" stroke-width="1"/>
<path d="M11.6,9.4 v5 M9.1,11.9 h5" stroke="#20108a" stroke-width="1.3"/></svg>
<svg style="left:395px;top:64.5px;" width="5" height="3" viewBox="0 0 5 3"><path d="M0,0 L5,0 L2.5,3 Z" fill="#000"/></svg>
<svg style="left:287px;top:84px;" width="16" height="12" viewBox="0 0 16 12"><path d="M1,10.5 L1,1.8 Q1,1 1.8,1 L5,1 L6.3,2.6 L11.5,2.6 Q12.3,2.6 12.3,3.4 L12.3,4.6" fill="#f7e3b0" stroke="#c48a2c" stroke-width="1"/><path d="M1,10.7 L3.6,5.2 Q3.9,4.6 4.6,4.6 L14.4,4.6 Q15.3,4.6 14.9,5.4 L12.6,10.2 Q12.3,10.8 11.6,10.8 L1.2,10.8 Z" fill="#fbeecb" stroke="#c48a2c" stroke-width="1" stroke-linejoin="round"/></svg>
<span class="t" style="left:305px;top:81px;font-size:14.67px;line-height:19px;letter-spacing:0.621px;color:#333;">Mediators</span>
<svg style="left:511px;top:83px;" width="10" height="10" viewBox="0 0 10 10"><path d="M1,8.9 L3.6,6.3" stroke="#55554c" stroke-width="1" stroke-dasharray="1.1 0.7"/><path d="M2.3,4.6 L2.94,3.96 L3.54,4.56 L5.66,2.44 L5.06,1.84 L5.7,1.2 L8.6,4.1 L7.96,4.74 L7.36,4.14 L5.24,6.26 L5.84,6.86 L5.2,7.5 Z" fill="#b6b29c" stroke="#55554c" stroke-width="0.9" stroke-linejoin="round"/></svg>
<span class="t" style="left:328px;top:105px;font-size:14.67px;line-height:19px;letter-spacing:-0.318px;color:#333;">Call</span>
<span class="t" style="left:328px;top:137px;font-size:14.67px;line-height:19px;letter-spacing:0.267px;color:#333;">CallTemplate</span>
<span class="t" style="left:328px;top:169px;font-size:14.67px;line-height:19px;letter-spacing:0.801px;color:#333;">Drop</span>
<span class="t" style="left:328px;top:201px;font-size:14.67px;line-height:19px;letter-spacing:0.175px;color:#333;">Log</span>
<span class="t" style="left:328px;top:233px;font-size:14.67px;line-height:19px;letter-spacing:0.344px;color:#333;">LoopBack</span>
<span class="t" style="left:328px;top:265px;font-size:14.67px;line-height:19px;letter-spacing:0.570px;color:#333;">Property</span>
<span class="t" style="left:328px;top:297px;font-size:14.67px;line-height:19px;letter-spacing:0.522px;color:#333;">PropertyGroup</span>
<span class="t" style="left:328px;top:329px;font-size:14.67px;line-height:19px;letter-spacing:0.111px;color:#333;">Respond</span>
<span class="t" style="left:328px;top:361px;font-size:14.67px;line-height:19px;letter-spacing:-0.065px;color:#333;">Send</span>
<span class="t" style="left:328px;top:393px;font-size:14.67px;line-height:19px;letter-spacing:-0.009px;color:#333;">Sequence</span>
<span class="t" style="left:328px;top:425px;font-size:14.67px;line-height:19px;letter-spacing:0.387px;color:#333;">Store</span>
<span class="t" style="left:328px;top:462px;font-size:14.67px;line-height:19px;letter-spacing:0.563px;color:#333;">ConditionalRouter</span>
<span class="t" style="left:328px;top:494px;font-size:14.67px;line-height:19px;letter-spacing:0.400px;color:#333;">Filter</span>
<svg style="left:301px;top:108px;" width="23" height="19" viewBox="0 0 23 19"><path d="M10,1 v10 M7.6,3.6 L10,1 L12.4,3.6" stroke="#3a97d4" stroke-width="1.2" fill="none" /><path d="M14.4,1 v10 M12,8.4 L14.4,11 L16.8,8.4" stroke="#3a97d4" stroke-width="1.2" fill="none" /><path d="M0,15.5 h6 M3.6,13 L6.2,15.5 L3.6,18" stroke="#3a97d4" stroke-width="1.2" fill="none" /><path d="M16,15.5 h6.4 M19.8,13 L22.4,15.5 L19.8,18" stroke="#3a97d4" stroke-width="1.2" fill="none" /><circle cx="9.6" cy="15.5" r="0.9" fill="#3a97d4"/><circle cx="13.2" cy="15.5" r="0.9" fill="#3a97d4"/></svg>
<svg style="left:301px;top:140px;" width="23" height="18" viewBox="0 0 23 18"><path d="M0,1.3 h23" stroke="#3a97d4" stroke-width="1" fill="none" opacity=".8"/><path d="M0.6,4.6 h9.4 v9.6 h-9.4 Z M12.8,4.6 h9.6 v9.6 h-9.6 Z" stroke="#3a97d4" stroke-width="1.2" fill="none" /><path d="M0,16.9 h23" stroke="#3a97d4" stroke-width="1.8" fill="none" /></svg>
<svg style="left:301px;top:171px;" width="23" height="20" viewBox="0 0 23 20"><path d="M4.6,1.5 h10.4 l3.8,3.8 v13.8 h-14.2 Z M15,1.5 v3.8 h3.8" stroke="#3a97d4" stroke-width="1" fill="none" /><path d="M7.5,7 h5 M7.5,10 h9 M7.5,13 h9 M7.5,15.6 h9" stroke="#3a97d4" stroke-width="0.9" fill="none" stroke-dasharray="2 1" opacity=".8"/><path d="M0.8,1.2 L22.2,18.8 M22.2,1.2 L0.8,18.8" stroke="#3a97d4" stroke-width="2" fill="none" /></svg>
<svg style="left:301px;top:205px;" width="23" height="17" viewBox="0 0 23 17"><path d="M0.5,1.3 h15 M0.5,5 h7 M9,5 h6.5 M3.5,8.7 h9 M0.5,12.3 h6 M8,12.3 h6" stroke="#3a97d4" stroke-width="1.2" fill="none" /><path d="M0.5,16 h21.5" stroke="#3a97d4" stroke-width="1.3" fill="none" /><path d="M18.6,0.6 v13 M15,9.6 L18.6,13.6 L22.2,9.6" stroke="#3a97d4" stroke-width="1.7" fill="none" /></svg>
<svg style="left:300px;top:236px;" width="25" height="19" viewBox="0 0 25 19"><path d="M4.4,16.2 C0.8,14 0.4,8 3.5,5.5 C6,3.5 9,4.4 11,6.6 L15,11.4 C17,13.8 20,15 22.3,12.8 C25,10 24.2,5.2 20.2,2.8" stroke="#3a97d4" stroke-width="1.7" fill="none" /><path d="M18.8,6.6 L19.8,2.6 L23.6,3.6" stroke="#3a97d4" stroke-width="1.6" fill="none" /><path d="M3.2,12.4 L4,16.6 L8,15.4" stroke="#3a97d4" stroke-width="1.6" fill="none" /></svg>
<svg style="left:300px;top:267px;" width="25" height="19" viewBox="0 0 25 19"><path d="M8.5,2.8 h16 M8.5,10 h16 M8.5,17 h16" stroke="#3a97d4" stroke-width="1.6" fill="none" /><path d="M0.8,3.2 L2.4,4.8 L5.4,1.4 M0.8,10.4 L2.4,12 L5.4,8.6 M0.8,17.4 L2.4,19 L5.4,15.6" stroke="#3a97d4" stroke-width="1.5" fill="none" /></svg>
<svg style="left:300px;top:298px;" width="25" height="24" viewBox="0 0 25 24"><rect x="0.7" y="0.7" width="23.2" height="22.2" rx="3.2" fill="#fff" stroke="#3a97d4" stroke-width="1.1"/><path d="M9,6.6 h7.5 M9,10.2 h7.5 M12.5,14.8 h7.5 M12.5,18.4 h7.5" stroke="#3a97d4" stroke-width="1.4" fill="none" /><path d="M4.4,6.6 L5.4,7.6 L7,5.6 M4.4,10.2 L5.4,11.2 L7,9.2 M8,14.8 L9,15.8 L10.6,13.8 M8,18.4 L9,19.4 L10.6,17.4" stroke="#3a97d4" stroke-width="1" fill="none" /></svg>
<svg style="left:300px;top:331px;" width="25" height="22" viewBox="0 0 25 22"><path d="M21.4,0.8 C25.5,7 22.5,13.6 15.5,13.6 L1.8,13.6" stroke="#3a97d4" stroke-width="1.9" fill="none" /><path d="M8.2,7.8 L1.6,13.6 L8.2,19.8" stroke="#3a97d4" stroke-width="1.9" fill="none" /></svg>
<svg style="left:301px;top:364px;" width="24" height="19" viewBox="0 0 24 19"><path d="M0.6,0.6 h8.8 l4,4 v12.8 h-12.8 Z M9.4,0.6 v4 h4" stroke="#3a97d4" stroke-width="0.9" fill="none" /><path d="M2.8,5.5 h3 M7,5.5 h2 M2.8,8 h8 M4,10.4 h7 M2.8,12.8 h8 M4.5,15.2 h6" stroke="#3a97d4" stroke-width="0.9" fill="none" opacity=".85" stroke-dasharray="3 0.8"/><path d="M15.5,9.6 h6.6 M19.6,7 L22.4,9.6 L19.6,12.2" stroke="#3a97d4" stroke-width="1.1" fill="none" /></svg>
<svg style="left:301px;top:397px;" width="23" height="17" viewBox="0 0 23 17"><path d="M0.80,0.8 v13.6" stroke="#3a97d4" stroke-width="1.15" fill="none" /><path d="M3.25,0.8 v13.6" stroke="#3a97d4" stroke-width="1.15" fill="none" /><path d="M5.70,0.8 v13.6" stroke="#3a97d4" stroke-width="1.15" fill="none" /><path d="M8.15,0.8 v13.6" stroke="#3a97d4" stroke-width="1.15" fill="none" /><path d="M10.60,0.8 v13.6" stroke="#3a97d4" stroke-width="1.15" fill="none" /><path d="M13.05,0.8 v13.6" stroke="#3a97d4" stroke-width="1.15" fill="none" /><path d="M15.50,1.6 v14.2" stroke="#3a97d4" stroke-width="1.15" fill="none" /><path d="M17.80,1.1 v14.4" stroke="#3a97d4" stroke-width="1.15" fill="none" /><path d="M20.10,0.6 v14.6" stroke="#3a97d4" stroke-width="1.15" fill="none" /><path d="M22.40,0.1 v14.8" stroke="#3a97d4" stroke-width="1.15" fill="none" /></svg>
<svg style="left:301px;top:428px;" width="23" height="20" viewBox="0 0 23 20"><path d="M0.8,1 h21.4" stroke="#3a97d4" stroke-width="1.2" fill="none" /><path d="M10,1.4 v7 M7.4,6 L10,8.6 L12.6,6" stroke="#3a97d4" stroke-width="1.1" fill="none" /><path d="M5,9.6 v8.4 c0,3 10.4,3 10.4,0 v-8.4 M5,9.6 c0,-2.8 10.4,-2.8 10.4,0 c0,2.8 -10.4,2.8 -10.4,0 M5,12.6 c0,2.8 10.4,2.8 10.4,0 M5,15.4 c0,2.8 10.4,2.8 10.4,0" stroke="#3a97d4" stroke-width="0.95" fill="none" /></svg>
<svg style="left:300px;top:465.5px;" width="25" height="22" viewBox="0 0 25 22"><path d="M0.8,10 h4.2 M3.2,8 L5.2,10 L3.2,12" stroke="#1fb58f" stroke-width="1.3" fill="none" /><circle cx="8.6" cy="10" r="1.9" fill="#fff" stroke="#1fb58f" stroke-width="1.4"/><path d="M10.2,8.8 L18,3.6" stroke="#1fb58f" stroke-width="1.5" fill="none" /><circle cx="19.6" cy="3" r="1.9" fill="#fff" stroke="#1fb58f" stroke-width="1.4"/><circle cx="19.6" cy="10" r="1.9" fill="#fff" stroke="#1fb58f" stroke-width="1.4"/><circle cx="19.6" cy="17" r="1.9" fill="#fff" stroke="#1fb58f" stroke-width="1.4"/><path d="M21.6,3 h2.4 M21.6,10 h2.4 M21.6,17 h2.4" stroke="#1fb58f" stroke-width="1.3" fill="none" /></svg>
<svg style="left:302px;top:496px;" width="21" height="21" viewBox="0 0 21 21"><path d="M1,1.2 L19.6,1.2 L12.2,11.4 L12.2,19 L8.4,19.8 L8.4,11.4 Z" stroke="#1fb58f" stroke-width="1.3" fill="none" stroke-linejoin="round"/></svg>
<div style="left:287px;top:456px;width:234px;height:1px;background:#9b9893;"></div>
<div style="left:366px;top:518px;width:76px;height:7px;background:#b9b6b1;"></div>
<svg style="left:401.5px;top:520px;" width="5" height="3" viewBox="0 0 5 3"><path d="M0,0 L5,0 L2.5,3 Z" fill="#000"/></svg>
<div style="left:284px;top:525px;width:240px;height:1px;background:#a5a29d;"></div>
<div style="left:284px;top:526px;width:240px;height:21px;background:linear-gradient(#f1efed 0%,#e4e1de 45%,#c9c5c0 100%);"></div>
<div style="left:284px;top:547px;width:240px;height:1px;background:#fbfbfa;"></div>
<div style="left:284px;top:548px;width:240px;height:1px;background:#aaa6a1;"></div>
<svg style="left:287px;top:532px;" width="16" height="12" viewBox="0 0 16 12"><path d="M1,10.5 L1,1.8 Q1,1 1.8,1 L5,1 L6.3,2.6 L11.5,2.6 Q12.3,2.6 12.3,3.4 L12.3,4.6" fill="#f7e3b0" stroke="#c48a2c" stroke-width="1"/><path d="M1,10.7 L3.6,5.2 Q3.9,4.6 4.6,4.6 L14.4,4.6 Q15.3,4.6 14.9,5.4 L12.6,10.2 Q12.3,10.8 11.6,10.8 L1.2,10.8 Z" fill="#fbeecb" stroke="#c48a2c" stroke-width="1" stroke-linejoin="round"/></svg>
<span class="t" style="left:305px;top:529px;font-size:14.67px;line-height:19px;letter-spacing:0.458px;color:#333;">EndPoints</span>
<div style="left:284px;top:549px;width:240px;height:21px;background:linear-gradient(#f1efed 0%,#e4e1de 45%,#c9c5c0 100%);"></div>
<div style="left:284px;top:570px;width:240px;height:1px;background:#fbfbfa;"></div>
<div style="left:284px;top:571px;width:240px;height:1px;background:#aaa6a1;"></div>
<svg style="left:287px;top:555px;" width="16" height="12" viewBox="0 0 16 12"><path d="M1,10.5 L1,1.8 Q1,1 1.8,1 L5,1 L6.3,2.6 L11.5,2.6 Q12.3,2.6 12.3,3.4 L12.3,4.6" fill="#f7e3b0" stroke="#c48a2c" stroke-width="1"/><path d="M1,10.7 L3.6,5.2 Q3.9,4.6 4.6,4.6 L14.4,4.6 Q15.3,4.6 14.9,5.4 L12.6,10.2 Q12.3,10.8 11.6,10.8 L1.2,10.8 Z" fill="#fbeecb" stroke="#c48a2c" stroke-width="1" stroke-linejoin="round"/></svg>
<span class="t" style="left:305px;top:552px;font-size:14.67px;line-height:19px;letter-spacing:0.351px;color:#333;">Links</span>
<div style="left:284px;top:572px;width:240px;height:21px;background:linear-gradient(#f1efed 0%,#e4e1de 45%,#c9c5c0 100%);"></div>
<div style="left:284px;top:593px;width:240px;height:1px;background:#fbfbfa;"></div>
<div style="left:284px;top:594px;width:240px;height:1px;background:#aaa6a1;"></div>
<svg style="left:287px;top:578px;" width="16" height="12" viewBox="0 0 16 12"><path d="M1,10.5 L1,1.8 Q1,1 1.8,1 L5,1 L6.3,2.6 L11.5,2.6 Q12.3,2.6 12.3,3.4 L12.3,4.6" fill="#f7e3b0" stroke="#c48a2c" stroke-width="1"/><path d="M1,10.7 L3.6,5.2 Q3.9,4.6 4.6,4.6 L14.4,4.6 Q15.3,4.6 14.9,5.4 L12.6,10.2 Q12.3,10.8 11.6,10.8 L1.2,10.8 Z" fill="#fbeecb" stroke="#c48a2c" stroke-width="1" stroke-linejoin="round"/></svg>
<span class="t" style="left:305px;top:575px;font-size:14.67px;line-height:19px;letter-spacing:0.174px;color:#333;">Defined Sequences</span>
<div style="left:284px;top:595px;width:240px;height:21px;background:linear-gradient(#f1efed 0%,#e4e1de 45%,#c9c5c0 100%);"></div>
<div style="left:284px;top:616px;width:240px;height:1px;background:#fbfbfa;"></div>
<svg style="left:287px;top:601px;" width="16" height="12" viewBox="0 0 16 12"><path d="M1,10.5 L1,1.8 Q1,1 1.8,1 L5,1 L6.3,2.6 L11.5,2.6 Q12.3,2.6 12.3,3.4 L12.3,4.6" fill="#f7e3b0" stroke="#c48a2c" stroke-width="1"/><path d="M1,10.7 L3.6,5.2 Q3.9,4.6 4.6,4.6 L14.4,4.6 Q15.3,4.6 14.9,5.4 L12.6,10.2 Q12.3,10.8 11.6,10.8 L1.2,10.8 Z" fill="#fbeecb" stroke="#c48a2c" stroke-width="1" stroke-linejoin="round"/></svg>
<span class="t" style="left:305px;top:598px;font-size:14.67px;line-height:19px;letter-spacing:0.440px;color:#333;">Defined EndPoints</span>
<div style="left:284px;top:616px;width:242px;height:1px;background:#a5a29d;"></div>
<div style="left:531px;top:29px;width:928px;height:1px;background:#b4b4b4;"></div>
<svg style="left:528px;top:29px;" width="4" height="4" viewBox="0 0 4 4"><path d="M0.5,4 Q0.5,0.5 4,0.5" fill="none" stroke="#b4b4b4" stroke-width="1"/></svg>
<div style="left:528px;top:617px;width:931px;height:1px;background:#b8b2ac;"></div>
<svg style="left:533px;top:133px;" width="175" height="175" viewBox="0 0 175 175"><rect x="1" y="1" width="173" height="173" fill="none" stroke="#a0a0a0" stroke-width="1.8" stroke-dasharray="6 3.4"/></svg>
<div style="left:534px;top:134px;width:173px;height:4px;background:#222;"></div>
<div style="left:539px;top:218px;width:30px;height:2px;background:#b0b0b0;"></div>
<svg style="left:568px;top:214px;" width="11" height="10" viewBox="0 0 11 10"><path d="M0,0 L11,5 L0,10 Z" fill="#a0a0a0"/></svg>
<div style="left:674px;top:219px;width:18px;height:2px;background:#b0b0b0;"></div>
<svg style="left:691px;top:215px;" width="11" height="10" viewBox="0 0 11 10"><path d="M0,0 L11,5 L0,10 Z" fill="#a0a0a0"/></svg>
<div style="left:584px;top:163px;width:84px;height:115px;background:#f5f5f5;border:1px solid #b7c0cc;"></div>
<div style="left:590px;top:164px;width:72px;height:80px;border:1px solid #fff;background:#f5f5f5;"></div>
<svg style="left:593px;top:164.5px;" width="66" height="66" viewBox="0 0 66 66"><circle cx="33" cy="33" r="32.6" fill="#3797d3"/>
<g stroke="#fff" stroke-width="3" fill="none">
<path d="M12.5,20 h29.5 M12.5,27 h15.5 M30.5,27 h11.5 M18,34.3 h16 M12.5,41 h11 M25.5,41 h13 M12.5,48 h40"/>
</g>
<path d="M46.5,18.5 v24 M40,36.5 L46.5,43.5 L53,36.5" stroke="#fff" stroke-width="2.2" fill="none" stroke-linejoin="miter"/></svg>
<span class="t" style="left:616px;top:230px;font-size:11px;line-height:14px;letter-spacing:0.216px;color:#a0a0a0;">Log</span>
<span class="t" style="left:615px;top:250px;font-size:13px;line-height:17px;letter-spacing:0.040px;color:#000;">Test</span>
<div style="left:284px;top:618px;width:1175px;height:21px;background:#ececec;"></div>
<div style="left:284px;top:617px;width:55px;height:22px;background:#efefef;border-right:1px solid #b0b0b0;border-bottom:1px solid #9a9a9a;border-radius:0 0 3px 3px;"></div>
<div style="left:339px;top:618px;width:56px;height:21px;border-right:1px solid #c4c4c4;border-top:1px solid #d2d2d2;"></div>
<span class="t" style="left:288px;top:619px;font-size:14.67px;line-height:19px;letter-spacing:0.223px;color:#333;">Design</span>
<span class="t" style="left:344px;top:619px;font-size:14.67px;line-height:19px;letter-spacing:0.003px;color:#333;">Source</span>
<svg style="left:289px;top:653px;" width="14" height="13" viewBox="0 0 14 13"><rect x="0.5" y="0.5" width="13" height="12" fill="#fff" stroke="#5a5f78" stroke-width="1"/>
<rect x="1" y="1" width="12" height="2.4" fill="#8c92b4"/>
<path d="M4.5,3.4 v9 M1,5.8 h12 M1,8 h12 M1,10.2 h12" stroke="#9ea4c0" stroke-width="0.8"/></svg>
<span class="t" style="left:308px;top:652px;font-size:14.67px;line-height:19px;letter-spacing:0.414px;color:#333;">Properties</span>
<svg style="left:387px;top:655px;" width="10" height="10" viewBox="0 0 10 10"><path d="M0.55,0.55 L3,0.55 L5,2.5 L7,0.55 L9.45,0.55 L9.45,3 L7.5,5 L9.45,7 L9.45,9.45 L7,9.45 L5,7.5 L3,9.45 L0.55,9.45 L0.55,7 L2.5,5 L0.55,3 Z" fill="#fff" stroke="#000" stroke-width="1.0" stroke-linejoin="round"/></svg>
<svg style="left:411px;top:653px;" width="14" height="14" viewBox="0 0 14 14"><rect x="0.9" y="0.9" width="11.4" height="9" rx="1.3" fill="#f6fdff" stroke="#2c5fb4" stroke-width="1.8"/>
<path d="M3.2,4.4 h4.8 M3.2,6.5 h6.8" stroke="#3a4a8c" stroke-width="1"/>
<path d="M4.6,10.6 L8.6,10.6 L9.4,12.3 L3.8,12.3 Z" fill="#2c5fb4"/><path d="M1.4,12.9 h10.6" stroke="#2c5fb4" stroke-width="1.2"/></svg>
<span class="t" style="left:429.5px;top:652px;font-size:14.67px;line-height:19px;letter-spacing:0.025px;color:#000;">Console</span>
<svg width="0" height="0" style="left:0;top:0"><defs><linearGradient id="gw" x1="0" y1="0" x2="1" y2="1"><stop offset="0" stop-color="#cfe8fa"/><stop offset="1" stop-color="#ffffff"/></linearGradient><linearGradient id="gt" x1="0" y1="0" x2="1" y2="0"><stop offset="0" stop-color="#3f7fd0"/><stop offset="1" stop-color="#b4d8f4"/></linearGradient></defs></svg>
<svg style="left:1379px;top:650px;" width="18" height="16" viewBox="0 0 18 16"><rect x="1.5" y="3.4" width="13" height="11.2" fill="url(#gw)" stroke="#aa9a6c" stroke-width="1"/>
<rect x="1.1" y="3" width="13.8" height="2.5" fill="url(#gt)"/>
<path d="M9.2,8.6 L11.2,6.4" stroke="#222" stroke-width="1"/>
<path d="M13.6,1 Q14.6,0.4 15.4,1.2 L16.8,2.8 Q17.4,3.8 16.6,4.6 L13.8,7 Q12.8,7.6 11.8,7 L10.6,5.6 Q10.2,4.6 11,3.6 Z" fill="#2fa03c" stroke="#1e7e2c" stroke-width="0.6"/>
<path d="M12.6,3.4 L14.8,5.4" stroke="#7fd084" stroke-width="0.8"/></svg>
<svg style="left:1406px;top:652px;" width="11" height="6" viewBox="0 0 11 6"><path d="M0.9,0.5 L10.1,0.5 L5.5,4.7 Z" fill="#fff" stroke="#000" stroke-width="1"/></svg>
<div style="left:1421px;top:651px;width:12px;height:6px;background:#fff;opacity:.55;"></div>
<div style="left:1422px;top:652px;width:10px;height:4px;border:1px solid #000;background:#fff;"></div>
<div style="left:1439px;top:651px;width:12px;height:12px;background:#fff;opacity:.55;"></div>
<div style="left:1440px;top:652px;width:10px;height:10px;border:1px solid #000;background:#fff;"></div>
<div style="left:1440px;top:654px;width:10px;height:1px;background:#000;"></div>
<div style="left:284px;top:675px;width:1175px;height:34px;background:linear-gradient(#ffffff 0%,#fff8f5 55%,#fdeae2 100%);"></div>
<div style="left:284px;top:709px;width:1175px;height:1px;background:#f6c2ad;"></div>
<div style="left:284px;top:675px;width:1175px;height:35px;background:linear-gradient(to right,rgba(255,255,255,0) 0%,rgba(255,255,255,0.25) 40%,rgba(255,255,255,0.62) 100%);"></div>
<svg style="left:289px;top:685px;" width="23" height="17" viewBox="0 0 23 17"><path d="M0.5,1.3 h15 M0.5,5 h7 M9,5 h6.5 M3.5,8.7 h9 M0.5,12.3 h6 M8,12.3 h6" stroke="#3a97d4" stroke-width="1.1" fill="none" /><path d="M0.5,16 h21.5" stroke="#3a97d4" stroke-width="1.2" fill="none" /><path d="M18.6,0.6 v13 M15,9.6 L18.6,13.6 L22.2,9.6" stroke="#3a97d4" stroke-width="1.7" fill="none" /></svg>
<span class="t" style="left:318px;top:683px;font-size:16.5px;line-height:21px;letter-spacing:0.302px;color:#ee7746;font-weight:bold;">Log Mediator Test</span>
<div style="left:284px;top:710px;width:52px;height:275px;background:#f1f0ee;border-right:1px solid #a9a7a3;"></div>
<div style="left:284px;top:710px;width:52px;height:11px;background:#f1f0ee;border-right:1px solid #a9a7a3;border-bottom:1px solid #a9a7a3;"></div>
<div style="left:284px;top:721px;width:52px;height:23px;background:#fff;"></div>
<div style="left:284px;top:744px;width:52px;height:1px;background:#a9a7a3;"></div>
<span class="t" style="left:291px;top:723px;font-size:14.67px;line-height:19px;letter-spacing:-0.518px;color:#333;font-weight:bold;">Base</span>
<div style="left:341px;top:715px;width:1102px;height:270px;background:#f7f7f7;"></div>
<div style="left:346px;top:720px;width:1093px;height:265px;background:#e9e9e9;border:1px solid #cfcfcf;border-bottom:0;border-radius:4px 4px 0 0;"></div>
<div style="left:352px;top:746px;width:1081px;height:239px;background:#fff;"></div>
<svg style="left:353px;top:730px;" width="8" height="5" viewBox="0 0 8 5"><path d="M0,0 L8,0 L4,4.6 Z" fill="#ee7746"/></svg>
<span class="t" style="left:367px;top:723px;font-size:14.67px;line-height:19px;letter-spacing:0.414px;color:#ee7746;">Properties</span>
<span class="t" style="left:357px;top:757px;font-size:14.67px;line-height:19px;letter-spacing:0.219px;color:#2e2e2e;">Log Category:</span>
<span class="t" style="left:357px;top:791px;font-size:14.67px;line-height:19px;letter-spacing:0.130px;color:#2e2e2e;">Log Level:</span>
<span class="t" style="left:357px;top:822px;font-size:14.67px;line-height:19px;letter-spacing:0.282px;color:#2e2e2e;">Log Separator:</span>
<div style="left:467px;top:752px;width:931px;height:27px;background:#fff;border:1px solid #b4b4b4;border-radius:4px;box-shadow:0 1px 0 #e6e6e6;"></div>
<span class="t" style="left:474.5px;top:757px;font-size:14.67px;line-height:19px;letter-spacing:-0.260px;color:#333;">INFO</span>
<svg style="left:1380px;top:763px;" width="10" height="5" viewBox="0 0 10 5"><path d="M0,0 L10,0 L5,5 Z" fill="#111"/></svg>
<div style="left:467px;top:786px;width:931px;height:27px;background:#fff;border:1px solid #b4b4b4;border-radius:4px;box-shadow:0 1px 0 #e6e6e6;"></div>
<span class="t" style="left:474.5px;top:791px;font-size:14.67px;line-height:19px;letter-spacing:-0.593px;color:#333;">FULL</span>
<svg style="left:1380px;top:797px;" width="10" height="5" viewBox="0 0 10 5"><path d="M0,0 L10,0 L5,5 Z" fill="#111"/></svg>
<div style="left:465px;top:818px;width:935px;height:25px;background:#fff;border:1px solid #c9c9c9;"></div>
<div style="left:467px;top:821px;width:931px;height:19px;background:#fff;border:1px solid #9f9f9f;border-radius:4px;box-shadow:inset 0 1px 1px #ddd;"></div>
<div style="left:1406px;top:820px;width:20px;height:20px;border-radius:50%;border:1.4px solid #4f5f8a;background:linear-gradient(#ffffff,#eceef4);"></div>
<span class="t" style="left:1411.3px;top:820px;font-size:16px;line-height:21px;letter-spacing:0.000px;color:#4a5678;font-weight:bold;">?</span>
<span class="t" style="left:378px;top:855px;font-size:14.67px;line-height:19px;letter-spacing:0.414px;color:#2e2e2e;">Properties</span>
<div style="left:1284px;top:848px;width:28px;height:26px;background:linear-gradient(#ffffff,#f8f8f8);border:1px solid #b9b9b9;border-radius:5px;box-shadow:0 1px 0 #e6e6e6;"></div>
<div style="left:1319px;top:848px;width:28px;height:26px;background:linear-gradient(#ffffff,#f8f8f8);border:1px solid #b9b9b9;border-radius:5px;box-shadow:0 1px 0 #e6e6e6;"></div>
<div style="left:1354px;top:848px;width:28px;height:26px;background:linear-gradient(#ffffff,#f8f8f8);border:1px solid #b9b9b9;border-radius:5px;box-shadow:0 1px 0 #e6e6e6;"></div>
<div style="left:1389px;top:848px;width:28px;height:26px;background:linear-gradient(#ffffff,#f8f8f8);border:1px solid #d9d9d9;border-radius:5px;box-shadow:0 1px 0 #e6e6e6;"></div>
<svg width="0" height="0" style="left:0;top:0"><defs><linearGradient id="gy" x1="0" y1="0" x2="0" y2="1"><stop offset="0" stop-color="#fffdf0"/><stop offset="1" stop-color="#ffd03c"/></linearGradient><linearGradient id="gg" x1="0" y1="0" x2="0" y2="1"><stop offset="0" stop-color="#8fc84a"/><stop offset="0.5" stop-color="#c2dc50"/><stop offset="1" stop-color="#6fb83c"/></linearGradient></defs></svg>
<svg style="left:1292px;top:854px;" width="12" height="14" viewBox="0 0 12 14"><path d="M3.6,0.6 L8.4,0.6 L8.4,6.8 L11.4,6.8 L6,13.4 L0.6,6.8 L3.6,6.8 Z" fill="url(#gy)" stroke="#c48a1a" stroke-width="1.1" stroke-linejoin="round"/></svg>
<svg style="left:1327px;top:854px;" width="12" height="14" viewBox="0 0 12 14"><path d="M3.6,13.4 L8.4,13.4 L8.4,7.2 L11.4,7.2 L6,0.6 L0.6,7.2 L3.6,7.2 Z" fill="url(#gy)" stroke="#c48a1a" stroke-width="1.1" stroke-linejoin="round"/></svg>
<svg style="left:1362px;top:855px;" width="12" height="12" viewBox="0 0 12 12"><path d="M4.3,0.7 h3.4 v3.6 h3.6 v3.4 h-3.6 v3.6 h-3.4 v-3.6 h-3.6 v-3.4 h3.6 Z" fill="url(#gg)" stroke="#2f8a4a" stroke-width="1.1" stroke-linejoin="round"/></svg>
<svg style="left:1397px;top:855px;" width="12" height="12" viewBox="0 0 12 12"><path d="M2.4,0.6 L6,4 L9.6,0.6 L11.4,2.4 L8,6 L11.4,9.6 L9.6,11.4 L6,8 L2.4,11.4 L0.6,9.6 L4,6 L0.6,2.4 Z" fill="#f4a9b0" stroke="#ef9aa2" stroke-width="0.6" stroke-linejoin="round"/></svg>
<div style="left:361px;top:879px;width:1063px;height:106px;background:#fff;border:2px solid #c4c4c4;border-bottom:0;"></div>
</body></html>
